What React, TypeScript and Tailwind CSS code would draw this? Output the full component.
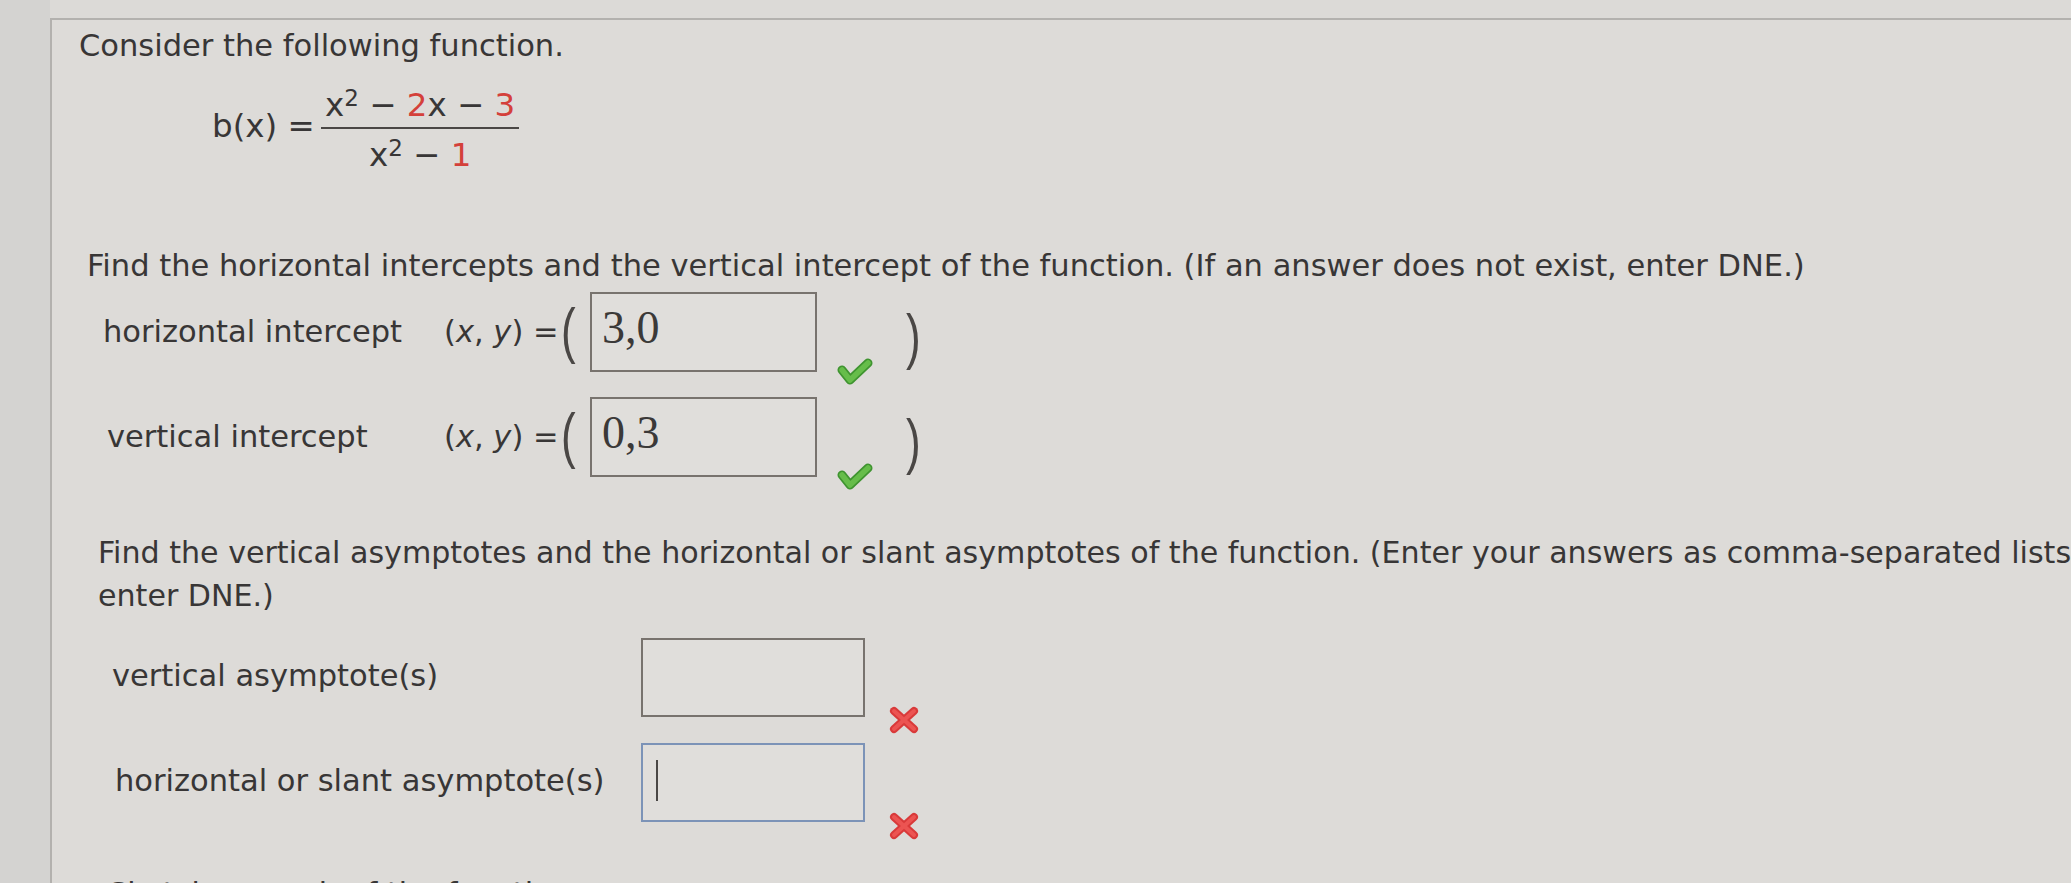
import React from 'react'

const SANS = "font-['DejaVu_Sans',Verdana,sans-serif]"

function Check() {
  return (
    <svg width="36" height="28" viewBox="0 0 36 28" className="block">
      <polyline points="5,12 13,22 31,5" fill="none" stroke="#3f9430" strokeWidth="9" strokeLinecap="round" strokeLinejoin="round" />
      <polyline points="5,12 13,22 31,5" fill="none" stroke="#66bd4a" strokeWidth="5.5" strokeLinecap="round" strokeLinejoin="round" />
    </svg>
  )
}

function Cross() {
  return (
    <svg width="30" height="28" viewBox="0 0 30 28" className="block">
      <g stroke="#d93a3a" strokeWidth="8" strokeLinecap="round">
        <line x1="5" y1="5" x2="25" y2="23" />
        <line x1="25" y1="5" x2="5" y2="23" />
      </g>
      <g stroke="#ec5452" strokeWidth="4" strokeLinecap="round">
        <line x1="5" y1="5" x2="25" y2="23" />
        <line x1="25" y1="5" x2="5" y2="23" />
      </g>
    </svg>
  )
}

function Paren({ children }: { children: React.ReactNode }) {
  return (
    <span className="inline-block font-['Liberation_Sans',Arial,sans-serif] text-[44px] leading-[44px] scale-y-[1.4] text-[#4a4745]">
      {children}
    </span>
  )
}

interface PointRowProps {
  label: string
  value: string
  labelPad: string
}

function PointRow({ label, value, labelPad }: PointRowProps) {
  return (
    <div className="flex items-start h-[80px]">
      <div className={`${labelPad} w-[392px] shrink-0 mt-[22px] leading-[36px] whitespace-nowrap`}>{label}</div>
      <div className="w-[117px] shrink-0 mt-[22px] leading-[36px] whitespace-nowrap">
        (<i>x</i>, <i>y</i>) =
      </div>
      <div className="w-[29px] shrink-0 mt-[16px]">
        <Paren>(</Paren>
      </div>
      <div className="w-[227px] h-[80px] shrink-0 border-2 border-[#78736e] bg-[#e0dedb] pl-[10px] pt-[11px]">
        <span className="font-['Liberation_Serif','Times_New_Roman',serif] text-[46px] leading-[46px] text-[#3b3938]">
          {value}
        </span>
      </div>
      <div className="ml-[20px] mt-[66px] shrink-0">
        <Check />
      </div>
      <div className="ml-[33px] mt-[22px] shrink-0">
        <Paren>)</Paren>
      </div>
    </div>
  )
}

interface AsymRowProps {
  label: string
  labelPad: string
  focused?: boolean
  crossTop: string
}

function AsymRow({ label, labelPad, focused, crossTop }: AsymRowProps) {
  return (
    <div className="flex items-start h-[79px]">
      <div className={`${labelPad} w-[589px] shrink-0 mt-[20px] leading-[36px] whitespace-nowrap`}>{label}</div>
      <div
        className={
          focused
            ? 'w-[224px] h-[79px] shrink-0 border-2 border-[#7c93b7] bg-[#e0dedb] pl-[13px] pt-[15px]'
            : 'w-[224px] h-[79px] shrink-0 border-2 border-[#78736e] bg-[#e0dedb]'
        }
      >
        {focused && <div className="w-[2px] h-[41px] bg-[#4a4745]" />}
      </div>
      <div className={`ml-[24px] ${crossTop} shrink-0`}>
        <Cross />
      </div>
    </div>
  )
}

export default function App() {
  return (
    <div className={`${SANS} w-[2071px] h-[883px] overflow-hidden flex bg-[#d4d3d1] text-[30.5px] text-[#383636]`}>
      {/* left margin strip */}
      <div className="w-[50px] shrink-0" />

      <div className="flex-1 flex flex-col bg-[#dcdad7] pt-[18px]">
        <div className="flex-1 border-t-2 border-l-2 border-[#b3b1ae] bg-[#dddbd8] pt-[8px]">
          <p className="pl-[27px] leading-[36px] whitespace-nowrap">Consider the following function.</p>

          {/* b(x) = (x^2 - 2x - 3) / (x^2 - 1) */}
          <div className="pl-[160px] mt-[22px] flex items-start text-[32.5px]">
            <div className="mt-[21px] leading-[38px] whitespace-nowrap w-[109px]">b(x) =</div>
            <div className="flex flex-col items-center">
              <div className="leading-[38px] whitespace-nowrap px-[4px]">
                x<sup className="text-[23px] top-[-10px] relative">2</sup> − <span className="text-[#d4403a]">2</span>x − <span className="text-[#d4403a]">3</span>
              </div>
              <div className="w-full h-[2px] bg-[#4a4745] mt-[3px]" />
              <div className="leading-[38px] whitespace-nowrap mt-[7px]">
                x<sup className="text-[23px] top-[-10px] relative">2</sup> − <span className="text-[#d4403a]">1</span>
              </div>
            </div>
          </div>

          <p className="pl-[35px] mt-[74px] leading-[36px] whitespace-nowrap">
            Find the horizontal intercepts and the vertical intercept of the function. (If an answer does not exist, enter DNE.)
          </p>

          <div className="mt-[8px] flex flex-col gap-[25px]">
            <PointRow label="horizontal intercept" value="3,0" labelPad="pl-[51px]" />
            <PointRow label="vertical intercept" value="0,3" labelPad="pl-[55px]" />
          </div>

          <div className="pl-[46px] mt-[54px] leading-[43px] text-[30.1px]">
            <p className="whitespace-nowrap">
              Find the vertical asymptotes and the horizontal or slant asymptotes of the function. (Enter your answers as comma-separated lists. If an answer does not exist,
            </p>
            <p className="whitespace-nowrap">enter DNE.)</p>
          </div>

          <div className="mt-[21px] flex flex-col gap-[26px]">
            <AsymRow label="vertical asymptote(s)" labelPad="pl-[60px]" crossTop="mt-[68px]" />
            <AsymRow label="horizontal or slant asymptote(s)" labelPad="pl-[63px]" focused crossTop="mt-[69px]" />
          </div>

          <p className="pl-[56px] mt-[54px] leading-[36px] whitespace-nowrap">Sketch a graph of the function.</p>
        </div>
      </div>
    </div>
  )
}
